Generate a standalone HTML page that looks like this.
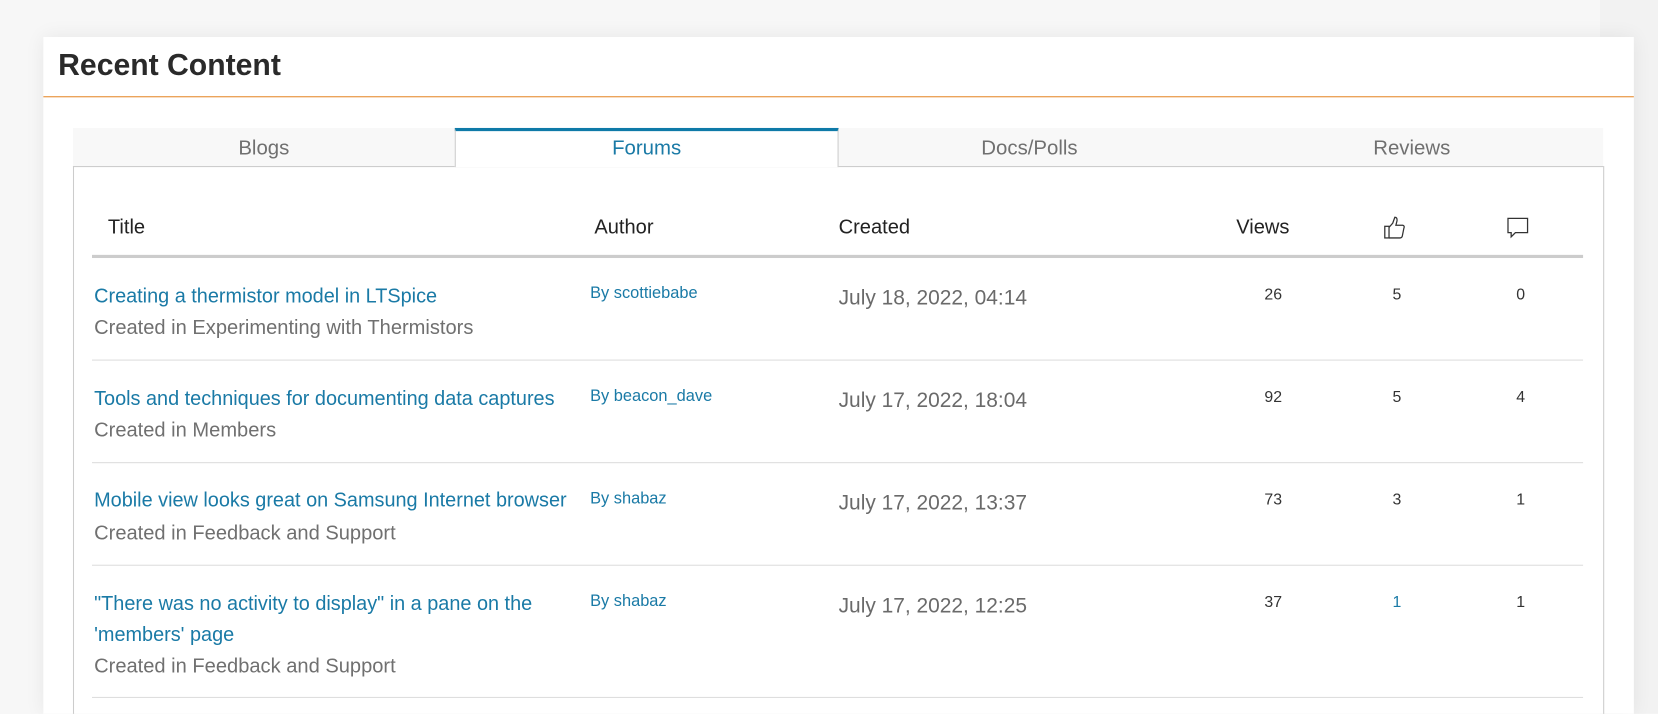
<!DOCTYPE html>
<html style="overflow:hidden;height:714px"><head><meta charset="utf-8"><style>
body{margin:0;width:1658px;height:714px;overflow:hidden;background:#f7f7f7;font-family:"Liberation Sans",Arial,sans-serif;position:relative}
#w{position:absolute;left:0;top:0;width:1568px;height:675px;transform:scale(1.0575);transform-origin:0 0;overflow:hidden}
.a{position:absolute;white-space:nowrap}
.card{position:absolute;left:41px;top:35px;width:1504px;height:640px;background:#fff;box-shadow:0 0 18px rgba(0,0,0,.07)}
.lnk{color:#1a7aa6;font-size:18.8px}
.sub{color:#707070;font-size:19px}
.au{color:#1a7aa6;font-size:15.5px}
.dt{color:#6a6a6a;font-size:19.8px}
.n{color:#333;font-size:15px;width:40px;text-align:center}
.hd{color:#222;font-size:19px}
.sep{position:absolute;left:87px;width:1410px;height:1px;background:#ddd}
</style></head><body>
<div id="w">
<div style="position:absolute;left:1513px;top:0;width:55px;height:675px;background:#f2f2f2"></div>
<div class="card"></div>
<div class="a" style="left:55px;top:46px;font-size:28.5px;font-weight:bold;color:#2a2a2a">Recent Content</div>
<div style="position:absolute;left:41px;top:91px;width:1504px;height:1.2px;background:#e5892a"></div>
<div style="position:absolute;left:69px;top:121px;width:1447px;height:36px;background:#f8f8f8;border-bottom:1px solid #ccc"></div>
<div style="position:absolute;left:69px;top:157px;width:1446px;height:520px;border:1px solid #ccc;border-top:none"></div>
<div style="position:absolute;left:430px;top:121px;width:363px;height:37px;background:#fff;border-top:3px solid #0e7aa8;border-left:1px solid #ccc;border-right:1px solid #ccc;box-sizing:border-box"></div>
<div class="a" style="left:69px;top:130px;width:361px;text-align:center;font-size:19.3px;color:#707070">Blogs</div>
<div class="a" style="left:430px;top:130px;width:363px;text-align:center;font-size:19.3px;color:#1a7aa6">Forums</div>
<div class="a" style="left:793px;top:130px;width:361px;text-align:center;font-size:19.3px;color:#707070">Docs/Polls</div>
<div class="a" style="left:1154px;top:130px;width:362px;text-align:center;font-size:19.3px;color:#707070">Reviews</div>
<div class="a hd" style="left:102px;top:205px">Title</div>
<div class="a hd" style="left:562px;top:205px">Author</div>
<div class="a hd" style="left:793px;top:205px">Created</div>
<div class="a hd" style="left:1169px;top:205px">Views</div>
<svg class="a" style="left:1308px;top:204px" width="22" height="23" viewBox="0 0 22 23" fill="none" stroke="#333" stroke-width="1.2"><rect x="1.5" y="10" width="4" height="11"/><path d="M5.5 11 L9 7 L11 1.5 Q13.5 1.5 13 5 L12 9 L18.5 9 Q20.5 9.5 19.5 12 L18 19.5 Q17.5 21 16 21 L5.5 21"/></svg>
<svg class="a" style="left:1424px;top:205px" width="23" height="22" viewBox="0 0 23 22" fill="none" stroke="#333" stroke-width="1.2"><path d="M2 1.5 H20.5 V15 H9 L5 19 V15 H2 Z"/></svg>
<div style="position:absolute;left:87px;top:241px;width:1410px;height:3px;background:#ccc"></div>

<div class="a lnk" style="left:89px;top:269px">Creating a thermistor model in LTSpice</div>
<div class="a sub" style="left:89px;top:300px">Created in Experimenting with Thermistors</div>
<div class="a au" style="left:558px;top:269px">By scottiebabe</div>
<div class="a dt" style="left:793px;top:271px">July 18, 2022, 04:14</div>
<div class="a n" style="left:1184px;top:270px">26</div><div class="a n" style="left:1301px;top:270px">5</div><div class="a n" style="left:1418px;top:270px">0</div>
<div class="sep" style="top:340px"></div>

<div class="a lnk" style="left:89px;top:366px">Tools and techniques for documenting data captures</div>
<div class="a sub" style="left:89px;top:397px">Created in Members</div>
<div class="a au" style="left:558px;top:366px">By beacon_dave</div>
<div class="a dt" style="left:793px;top:368px">July 17, 2022, 18:04</div>
<div class="a n" style="left:1184px;top:367px">92</div><div class="a n" style="left:1301px;top:367px">5</div><div class="a n" style="left:1418px;top:367px">4</div>
<div class="sep" style="top:437px"></div>

<div class="a lnk" style="left:89px;top:462px">Mobile view looks great on Samsung Internet browser</div>
<div class="a sub" style="left:89px;top:494px">Created in Feedback and Support</div>
<div class="a au" style="left:558px;top:463px">By shabaz</div>
<div class="a dt" style="left:793px;top:465px">July 17, 2022, 13:37</div>
<div class="a n" style="left:1184px;top:464px">73</div><div class="a n" style="left:1301px;top:464px">3</div><div class="a n" style="left:1418px;top:464px">1</div>
<div class="sep" style="top:534px"></div>

<div class="a lnk" style="left:89px;top:560px">"There was no activity to display" in a pane on the</div>
<div class="a lnk" style="left:89px;top:589px">'members' page</div>
<div class="a sub" style="left:89px;top:620px">Created in Feedback and Support</div>
<div class="a au" style="left:558px;top:560px">By shabaz</div>
<div class="a dt" style="left:793px;top:562px">July 17, 2022, 12:25</div>
<div class="a n" style="left:1184px;top:561px">37</div><div class="a n" style="left:1301px;top:561px;color:#1a7aa6">1</div><div class="a n" style="left:1418px;top:561px">1</div>
<div class="sep" style="top:659px"></div>
</div>
</body></html>
